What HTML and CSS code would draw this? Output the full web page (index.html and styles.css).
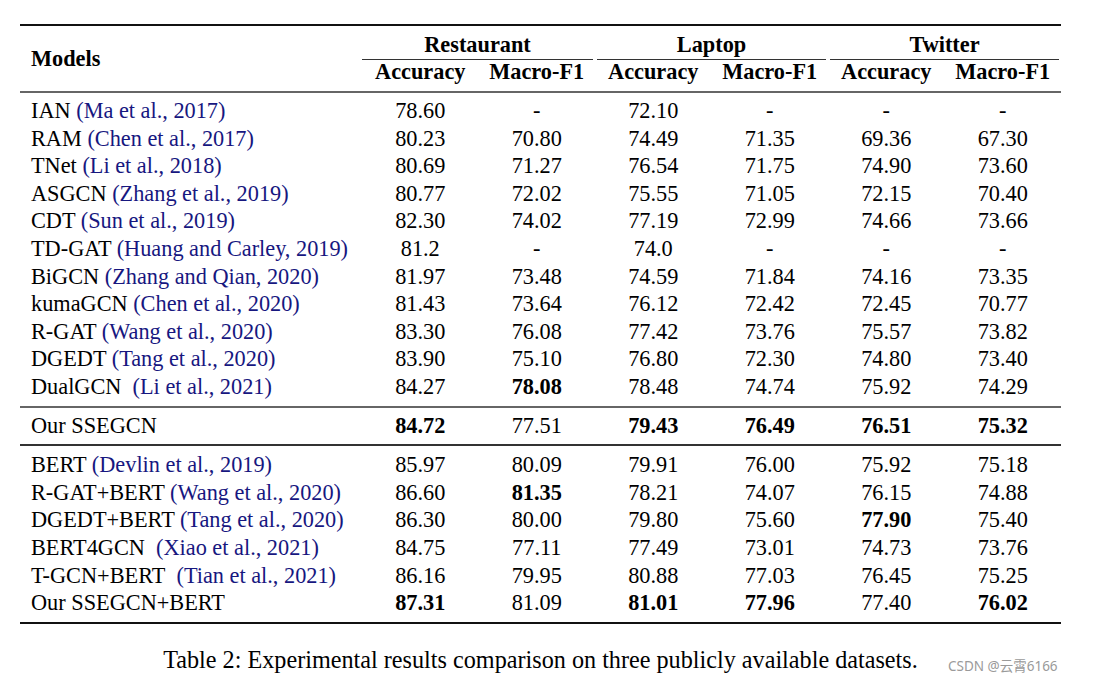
FILE: index.html
```html
<!DOCTYPE html>
<html>
<head>
<meta charset="utf-8">
<link rel="stylesheet" href="styles.css">
</head>
<body>
<div class="page">
  <table class="results">
    <colgroup>
      <col class="c-model">
      <col class="c-num"><col class="c-num">
      <col class="c-num"><col class="c-num">
      <col class="c-num"><col class="c-num">
    </colgroup>
    <thead>
      <tr class="h1">
        <th rowspan="2" class="model-h">Models</th>
        <th colspan="2"><div class="grp">Restaurant</div></th>
        <th colspan="2"><div class="grp">Laptop</div></th>
        <th colspan="2"><div class="grp">Twitter</div></th>
      </tr>
      <tr class="h2">
        <th>Accuracy</th><th>Macro-F1</th>
        <th>Accuracy</th><th>Macro-F1</th>
        <th>Accuracy</th><th>Macro-F1</th>
      </tr>
    </thead>
    <tbody class="sec">
      <tr><td class="m">IAN <span class="cite">(Ma et al., 2017)</span></td><td>78.60</td><td>-</td><td>72.10</td><td>-</td><td>-</td><td>-</td></tr>
      <tr><td class="m">RAM <span class="cite">(Chen et al., 2017)</span></td><td>80.23</td><td>70.80</td><td>74.49</td><td>71.35</td><td>69.36</td><td>67.30</td></tr>
      <tr><td class="m">TNet <span class="cite">(Li et al., 2018)</span></td><td>80.69</td><td>71.27</td><td>76.54</td><td>71.75</td><td>74.90</td><td>73.60</td></tr>
      <tr><td class="m">ASGCN <span class="cite">(Zhang et al., 2019)</span></td><td>80.77</td><td>72.02</td><td>75.55</td><td>71.05</td><td>72.15</td><td>70.40</td></tr>
      <tr><td class="m">CDT <span class="cite">(Sun et al., 2019)</span></td><td>82.30</td><td>74.02</td><td>77.19</td><td>72.99</td><td>74.66</td><td>73.66</td></tr>
      <tr><td class="m">TD-GAT <span class="cite">(Huang and Carley, 2019)</span></td><td>81.2</td><td>-</td><td>74.0</td><td>-</td><td>-</td><td>-</td></tr>
      <tr><td class="m">BiGCN <span class="cite">(Zhang and Qian, 2020)</span></td><td>81.97</td><td>73.48</td><td>74.59</td><td>71.84</td><td>74.16</td><td>73.35</td></tr>
      <tr><td class="m">kumaGCN <span class="cite">(Chen et al., 2020)</span></td><td>81.43</td><td>73.64</td><td>76.12</td><td>72.42</td><td>72.45</td><td>70.77</td></tr>
      <tr><td class="m">R-GAT <span class="cite">(Wang et al., 2020)</span></td><td>83.30</td><td>76.08</td><td>77.42</td><td>73.76</td><td>75.57</td><td>73.82</td></tr>
      <tr><td class="m">DGEDT <span class="cite">(Tang et al., 2020)</span></td><td>83.90</td><td>75.10</td><td>76.80</td><td>72.30</td><td>74.80</td><td>73.40</td></tr>
      <tr><td class="m">DualGCN&nbsp; <span class="cite">(Li et al., 2021)</span></td><td>84.27</td><td class="b">78.08</td><td>78.48</td><td>74.74</td><td>75.92</td><td>74.29</td></tr>
    </tbody>
    <tbody class="sec ours">
      <tr><td class="m">Our SSEGCN</td><td class="b">84.72</td><td>77.51</td><td class="b">79.43</td><td class="b">76.49</td><td class="b">76.51</td><td class="b">75.32</td></tr>
    </tbody>
    <tbody class="sec bert">
      <tr><td class="m">BERT <span class="cite">(Devlin et al., 2019)</span></td><td>85.97</td><td>80.09</td><td>79.91</td><td>76.00</td><td>75.92</td><td>75.18</td></tr>
      <tr><td class="m">R-GAT+BERT <span class="cite">(Wang et al., 2020)</span></td><td>86.60</td><td class="b">81.35</td><td>78.21</td><td>74.07</td><td>76.15</td><td>74.88</td></tr>
      <tr><td class="m">DGEDT+BERT <span class="cite">(Tang et al., 2020)</span></td><td>86.30</td><td>80.00</td><td>79.80</td><td>75.60</td><td class="b">77.90</td><td>75.40</td></tr>
      <tr><td class="m">BERT4GCN&nbsp; <span class="cite">(Xiao et al., 2021)</span></td><td>84.75</td><td>77.11</td><td>77.49</td><td>73.01</td><td>74.73</td><td>73.76</td></tr>
      <tr><td class="m">T-GCN+BERT&nbsp; <span class="cite">(Tian et al., 2021)</span></td><td>86.16</td><td>79.95</td><td>80.88</td><td>77.03</td><td>76.45</td><td>75.25</td></tr>
      <tr><td class="m">Our SSEGCN+BERT</td><td class="b">87.31</td><td>81.09</td><td class="b">81.01</td><td class="b">77.96</td><td>77.40</td><td class="b">76.02</td></tr>
    </tbody>
  </table>
  <div class="caption-row">
    <p class="caption">Table 2: Experimental results comparison on three publicly available datasets.</p>
    <span class="watermark">CSDN @云霄6166</span>
  </div>
</div>
</body>
</html>
```

FILE: styles.css
```css
html, body {
  margin: 0;
  padding: 0;
  background: #ffffff;
}

.page {
  padding: 24px 0 0 20px;
  width: 1041px;
  font-family: "Liberation Serif", "Times New Roman", serif;
  font-size: 22.3px;
  color: #000;
}

.results {
  width: 1041px;
  table-layout: fixed;
  border-collapse: collapse;
  border-top: 2px solid #111;
  border-bottom: 2px solid #111;
}

.c-model { width: 342px; }
.c-num { width: 116.5px; }

.results th,
.results td {
  padding: 0;
  text-align: center;
  white-space: nowrap;
  font-weight: normal;
}

.results th {
  font-weight: bold;
  line-height: 24px;
}

.h1 th {
  padding-top: 7px;
}

.results th.model-h {
  text-align: left;
  padding: 0 0 0 11px;
  vertical-align: middle;
}

.h1 th .grp {
  margin: 0 2px;
  padding-bottom: 2px;
  border-bottom: 1px solid #333;
}

.h1 th:nth-child(2) .grp { margin-left: 0; }

.h2 th {
  padding-bottom: 7px;
}

.sec {
  border-top: 2px solid #666;
}

.bert {
  border-top: 2px solid #333;
}

.results td {
  line-height: 27.6px;
}

.results td.m {
  text-align: left;
  padding-left: 11px;
}

.sec tr:first-child td {
  padding-top: 4px;
}

.sec tr:last-child td {
  padding-bottom: 5px;
}

.ours tr td {
  padding-top: 4px;
  padding-bottom: 5px;
}

.bert tr:first-child td {
  padding-top: 5px;
}

.bert tr:last-child td {
  padding-bottom: 5px;
}

.results td.b {
  font-weight: bold;
}

.cite {
  color: #17177f;
}

.caption-row {
  position: relative;
  padding-top: 22px;
}

.caption {
  margin: 0;
  text-align: center;
  font-size: 24.2px;
  line-height: 28px;
}

.watermark {
  position: absolute;
  left: 928px;
  top: 31px;
  font-family: "Noto Sans", "Noto Sans CJK SC", sans-serif;
  font-size: 13.5px;
  color: #9a9a9a;
  white-space: nowrap;
}
```
